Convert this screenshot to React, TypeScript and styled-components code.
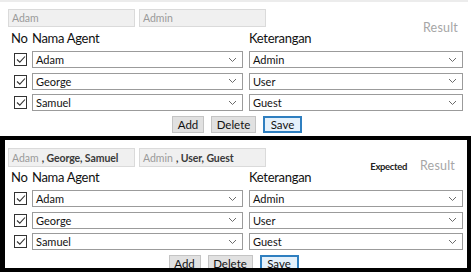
import React from "react";
import styled, { createGlobalStyle, css } from "styled-components";

const Global = createGlobalStyle`
  html, body { margin: 0; padding: 0; background: #ffffff; }
  body { width: 474px; height: 272px; overflow: hidden; font-family: "Lato", "Noto Sans", sans-serif; }
`;

const Page = styled.div`
  width: 474px;
  height: 272px;
  display: flex;
  flex-direction: column;
`;

const TopStrip = styled.div`
  height: 2px;
  background: #ececec;
  margin-right: 6px;
`;

const Section = styled.div`
  display: flex;
  flex-direction: column;
  padding: 7px 0 0 8px;
  height: 134px;
  box-sizing: border-box;
`;

const Frame = styled.div`
  width: 471px;
  height: 136px;
  box-sizing: border-box;
  border: 4px solid #000;
  border-left-width: 5px;
  overflow: hidden;
  display: flex;
  flex-direction: column;
  padding: 8px 0 0 3px;
`;

const TopRow = styled.div`
  display: flex;
  align-items: flex-start;
  gap: 4px;
  height: 19px;
`;

const TextBox = styled.div<{ $tall?: boolean }>`
  width: 127px;
  height: ${(p) => (p.$tall ? 19 : 18)}px;
  box-sizing: border-box;
  background: #f0f0f0;
  border: 1px solid #dadada;
  display: flex;
  align-items: center;
  padding-left: 3px;
  font-size: 10.5px;
  color: #9a9a9a;
  white-space: nowrap;
  overflow: hidden;
`;

const Extra = styled.span`
  font-weight: 700;
  font-size: 10.5px;
  letter-spacing: -0.1px;
  color: #3a3a3a;
  margin-left: 3px;
`;

const ResultBox = styled.div<{ $offset: number; $right: number }>`
  margin-left: auto;
  margin-right: ${(p) => p.$right}px;
  margin-top: ${(p) => p.$offset}px;
  display: flex;
  align-items: baseline;
  gap: 13px;
  line-height: 14px;
`;

const Expected = styled.span`
  font-weight: 700;
  font-size: 9.5px;
  letter-spacing: -0.35px;
  color: #222;
`;

const ResultText = styled.span`
  font-size: 12.5px;
  color: #a6a6a6;
  letter-spacing: 0.2px;
`;

const Grid = styled.div<{ $top: number }>`
  display: grid;
  grid-template-columns: 24px 217px 214px;
  margin-top: ${(p) => p.$top}px;
`;

const Header = styled.div<{ $pad: number }>`
  font-size: 13px;
  color: #111;
  height: 17px;
  line-height: 17px;
  padding-left: ${(p) => p.$pad}px;
  letter-spacing: -0.3px;
  white-space: nowrap;
  margin-bottom: 4px;
`;

const CheckCell = styled.div`
  display: flex;
  align-items: center;
  padding-left: 6px;
  height: 17px;
  margin-bottom: 4.5px;
`;

const Check = styled.div`
  width: 11px;
  height: 11px;
  border: 1px solid #333;
  background: #fff;
  display: flex;
  align-items: center;
  justify-content: center;
`;

const Combo = styled.div<{ $right: number }>`
  height: 17px;
  box-sizing: border-box;
  border: 1px solid #9b9b9b;
  background: #fff;
  display: flex;
  align-items: center;
  padding: 0 5px 0 3px;
  margin-right: ${(p) => p.$right}px;
  margin-bottom: 4.5px;
  font-size: 11px;
  color: #111;
`;

const ComboText = styled.span`
  flex: 1;
`;

const Buttons = styled.div<{ $top: number }>`
  display: flex;
  justify-content: center;
  gap: 7px;
  margin-top: ${(p) => p.$top}px;
  padding-right: 8px;
`;

const Button = styled.div<{ $w: number; $primary?: boolean }>`
  width: ${(p) => p.$w}px;
  height: 17px;
  box-sizing: border-box;
  display: flex;
  align-items: center;
  justify-content: center;
  font-size: 11.5px;
  color: #111;
  background: #e1e1e1;
  border: 1px solid #c4c4c4;
  ${(p) =>
    p.$primary &&
    css`
      background: #e5f1fb;
      border: 2px solid #2f7fc0;
    `}
`;

const Chevron = () => (
  <svg width="9" height="6" viewBox="0 0 9 6">
    <polyline points="1,1 4.5,4.5 8,1" fill="none" stroke="#6b6b6b" strokeWidth="1" />
  </svg>
);

const Tick = () => (
  <svg width="10" height="9" viewBox="0 0 10 9">
    <polyline points="1,4.5 3.8,7.2 9,1.5" fill="none" stroke="#333" strokeWidth="1.1" />
  </svg>
);

const rows = [
  ["Adam", "Admin"],
  ["George", "User"],
  ["Samuel", "Guest"],
];

const Table = ({ top }: { top: number }) => (
  <Grid $top={top}>
    <Header $pad={3}>No</Header>
    <Header $pad={0}>Nama Agent</Header>
    <Header $pad={0}>Keterangan</Header>
    {rows.map(([a, b]) => (
      <React.Fragment key={a}>
        <CheckCell>
          <Check>
            <Tick />
          </Check>
        </CheckCell>
        <Combo $right={6}>
          <ComboText>{a}</ComboText>
          <Chevron />
        </Combo>
        <Combo $right={0}>
          <ComboText>{b}</ComboText>
          <Chevron />
        </Combo>
      </React.Fragment>
    ))}
  </Grid>
);

const ButtonRow = ({ top }: { top: number }) => (
  <Buttons $top={top}>
    <Button $w={32}>Add</Button>
    <Button $w={45}>Delete</Button>
    <Button $w={39} $primary>
      Save
    </Button>
  </Buttons>
);

export default function App() {
  return (
    <Page>
      <Global />
      <TopStrip />
      <Section>
        <TopRow>
          <TextBox>Adam</TextBox>
          <TextBox>Admin</TextBox>
          <ResultBox $offset={12} $right={16}>
            <ResultText>Result</ResultText>
          </ResultBox>
        </TopRow>
        <Table top={2} />
        <ButtonRow top={0} />
      </Section>
      <Frame>
        <TopRow>
          <TextBox $tall>
            Adam<Extra>, George, Samuel</Extra>
          </TextBox>
          <TextBox $tall>
            Admin<Extra>, User, Guest</Extra>
          </TextBox>
          <ResultBox $offset={11} $right={12}>
            <Expected>Expected</Expected>
            <ResultText>Result</ResultText>
          </ResultBox>
        </TopRow>
        <Table top={2} />
        <ButtonRow top={0} />
      </Frame>
    </Page>
  );
}
